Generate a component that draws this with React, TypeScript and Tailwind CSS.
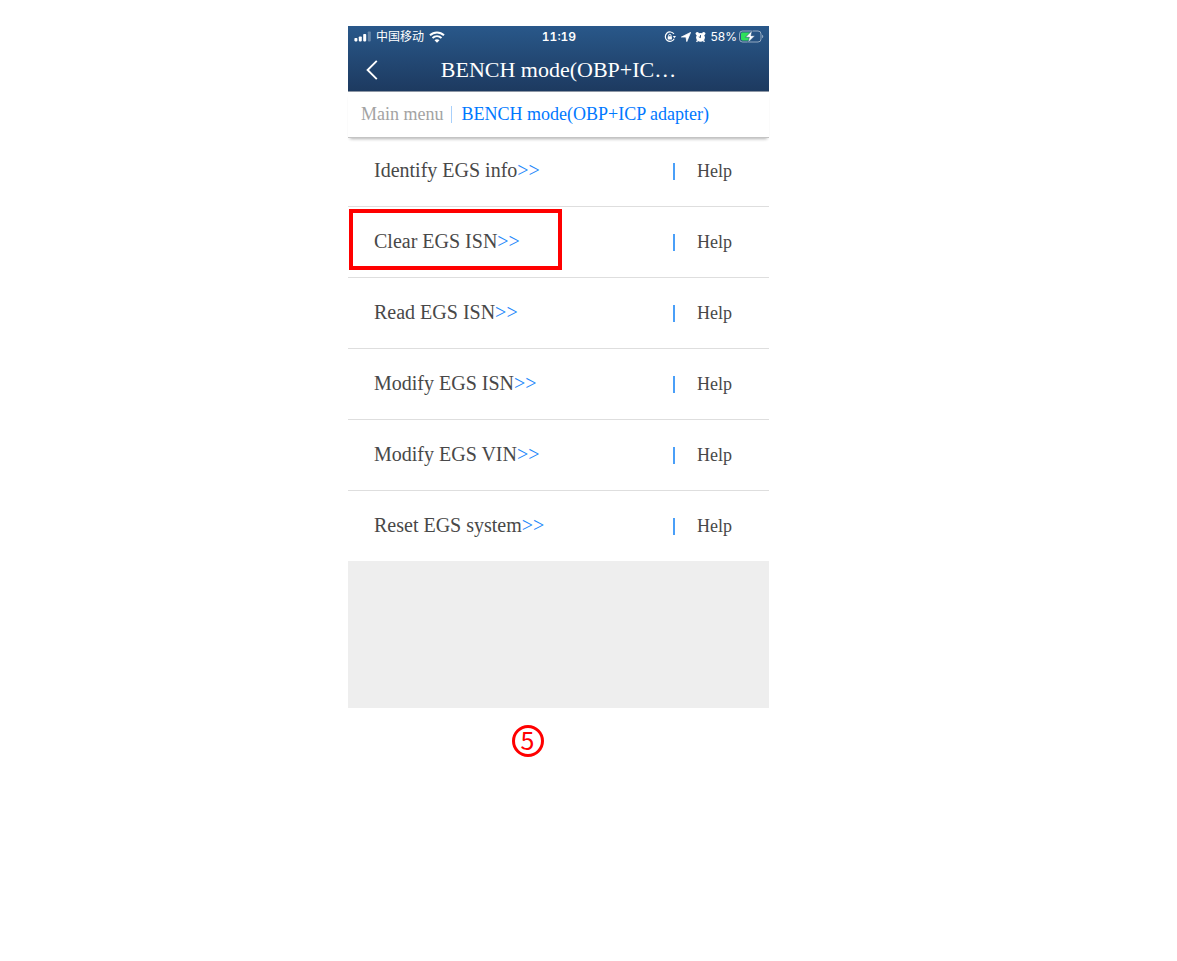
const items = [
  { label: "Identify EGS info" },
  { label: "Clear EGS ISN", marked: true },
  { label: "Read EGS ISN" },
  { label: "Modify EGS ISN" },
  { label: "Modify EGS VIN" },
  { label: "Reset EGS system" },
];

const Signal = () => (
  <svg width="18" height="11" viewBox="0 0 18 11" fill="#fff">
    <rect x="0.4" y="7" width="3" height="3.4" rx="0.8" />
    <rect x="4.8" y="5.4" width="3" height="5" rx="0.8" />
    <rect x="9.2" y="3" width="3" height="7.4" rx="0.8" />
    <rect x="13.8" y="0.4" width="3" height="10" rx="0.8" opacity="0.3" />
  </svg>
);

const Wifi = () => (
  <svg width="16" height="12" viewBox="0 0 16 12" fill="none" stroke="#fff">
    <path d="M1 4.3C5 0.4 11 0.4 15 4.3" strokeWidth="2" />
    <path d="M3.5 7C6.1 4.6 9.9 4.6 12.5 7" strokeWidth="1.9" />
    <path d="M8 11.8L5.5 9.2C7 7.9 9 7.9 10.5 9.2Z" fill="#fff" stroke="none" />
  </svg>
);

const RotationLock = () => (
  <svg width="12" height="12" viewBox="0 0 12 12" fill="none" stroke="#fff">
    <path d="M9.9 3A4.7 4.7 0 1 0 10.2 7.8" strokeWidth="1.2" />
    <path d="M8.8 5.1H12L10.4 7.2Z" fill="#fff" stroke="none" />
    <rect x="3.7" y="5.2" width="4.2" height="3.2" rx="0.5" fill="#fff" stroke="none" />
    <path d="M4.6 5.4V4.5A1.2 1.2 0 0 1 7 4.5V5.4" strokeWidth="1" />
  </svg>
);

const Location = () => (
  <svg width="10" height="10" viewBox="0 0 10 10" fill="#fff">
    <path d="M9.6 0.4L5.8 9.6L5 5H0.4Z" stroke="#fff" strokeWidth="0.8" strokeLinejoin="round" />
  </svg>
);

const Alarm = () => (
  <svg width="11" height="12" viewBox="0 0 11 12">
    <circle cx="2.3" cy="2.6" r="1.7" fill="#fff" />
    <circle cx="8.7" cy="2.6" r="1.7" fill="#fff" />
    <path d="M2.6 9.4L1.6 10.8M8.4 9.4L9.4 10.8" stroke="#fff" strokeWidth="1.4" />
    <circle cx="5.5" cy="6.4" r="4.4" fill="#fff" />
    <path d="M5.5 4V6.6L3.8 5.8" fill="none" stroke="#28507e" strokeWidth="0.9" />
  </svg>
);

const Battery = () => (
  <svg width="25" height="13" viewBox="0 0 25 13">
    <rect x="0.5" y="1" width="21.5" height="11" rx="3" fill="none" stroke="#fff" strokeOpacity="0.5" />
    <rect x="2" y="2.5" width="10" height="8" rx="1.4" fill="#2fe05a" />
    <path d="M23.2 4.8C24.6 5.3 24.6 7.7 23.2 8.2Z" fill="#fff" opacity="0.6" />
    <path
      d="M13.4 0.2L6.4 7.3H10.4L8.8 12.8L16 5.7H12Z"
      fill="#fff"
      stroke="#28507e"
      strokeWidth="0.6"
    />
  </svg>
);

const Back = () => (
  <svg width="12" height="20" viewBox="0 0 12 20" fill="none" stroke="#fff" strokeWidth="1.9">
    <path d="M10.8 0.9L1.6 10L10.8 19.1" />
  </svg>
);

const Header = () => {
  return (
    <header className="h-[66px] bg-linear-to-b from-[#29588a] to-[#1d3a60] border-b border-[#8d97a5] text-white">
      <div className="grid grid-cols-[1fr_auto_1fr] items-center h-[21px] pl-[6px] pr-[5px] font-['Inter','Noto_Sans_CJK_SC',sans-serif] text-[12px] leading-[21px]">
        <div className="flex items-center">
          <Signal />
          <span className="ml-[4px] mr-[5px]">中国移动</span>
          <Wifi />
        </div>
        <span className="font-semibold tabular-nums">11:19</span>
        <div className="flex items-center justify-end">
          <RotationLock />
          <span className="ml-[5px]">
            <Location />
          </span>
          <span className="ml-[4px]">
            <Alarm />
          </span>
          <span className="ml-[4px] mr-[2px]">58%</span>
          <Battery />
        </div>
      </div>
      <div className="grid grid-cols-[48px_1fr_48px] items-center h-[45px]">
        <button type="button" aria-label="Back" className="flex justify-center cursor-pointer">
          <Back />
        </button>
        <h1 className="text-center text-[22px] leading-[45px]">BENCH mode(OBP+IC…</h1>
      </div>
    </header>
  );
};

const Breadcrumb = () => {
  return (
    <nav className="relative z-10 flex items-center h-[46px] pl-[13px] bg-white text-[18px] border-b border-[#c4c4c4] shadow-[0_3px_3px_-2px_rgba(0,0,0,0.3)]">
      <a href="#main" className="text-[#a3a3a3]">
        Main menu
      </a>
      <span className="w-px h-[17px] ml-[7px] mr-[10px] bg-[#a8d0fb]"></span>
      <a href="#bench" className="text-[#0078ff]">
        BENCH mode(OBP+ICP adapter)
      </a>
    </nav>
  );
};

const App = () => {
  return (
    <main className="flex flex-col items-center pt-[26px] pr-[60px] font-['Liberation_Serif',serif]">
      <div className="w-full max-w-[421px] bg-[#eeeeee] pb-[147px]">
        <Header />
        <Breadcrumb />
        <ul className="-mt-[2px] bg-white text-[#484848]">
          {items.map((item) => (
            <li
              key={item.label}
              className="relative flex items-center h-[71px] pl-[26px] pr-[37px] border-b border-[#dedede] last:h-[70px] last:border-b-0"
            >
              <a href="#item" className="flex-1 pb-[2px] text-[20px]">
                {item.label}
                <span className="text-[#1a86fa]">&gt;&gt;</span>
              </a>
              <span className="w-[2px] h-[17px] mr-[22px] bg-[#4a9ff8]"></span>
              <a href="#help" className="text-[18px]">
                Help
              </a>
              {item.marked && (
                <div className="absolute left-px top-[2px] w-[213px] h-[61px] border-4 border-[#ff0000] pointer-events-none"></div>
              )}
            </li>
          ))}
        </ul>
      </div>
      <div className="flex items-center justify-center size-8 mt-[17px] mr-[62px] pb-[4px] rounded-full border-3 border-[#ff0000] text-[#ff0000] text-[25px] leading-[26px] font-['Noto_Sans_CJK_SC',sans-serif]">
        5
      </div>
    </main>
  );
};

export default App;
